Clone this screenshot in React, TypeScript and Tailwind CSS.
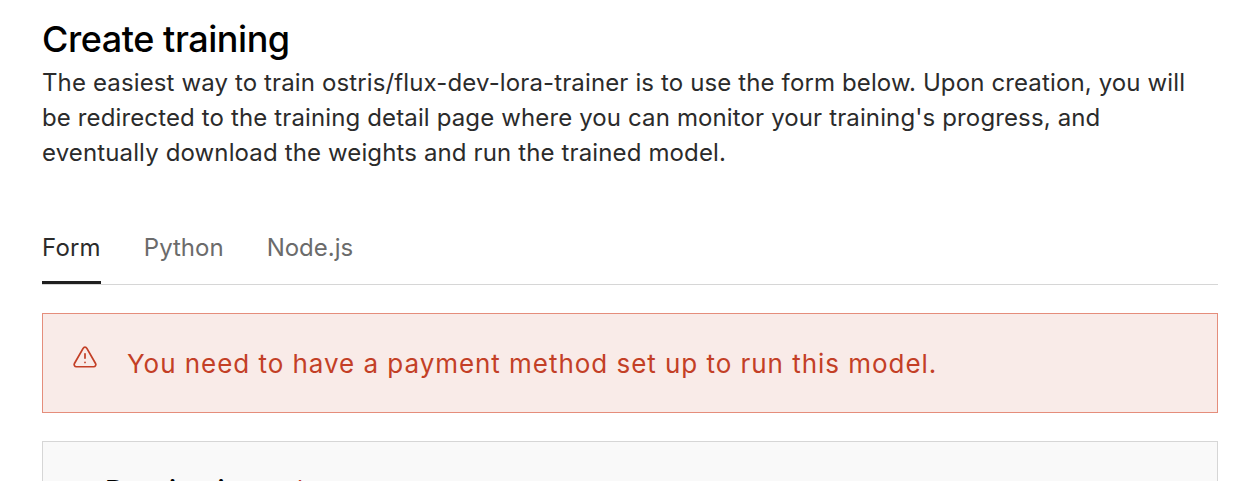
import { TriangleAlert } from 'lucide-react';

const tabs = ['Form', 'Python', 'Node.js'];

export default function App() {
    return (
        <div className="h-[481px] overflow-hidden bg-white font-['Inter',sans-serif] px-[42px] pt-[17px]">
            <div className="w-[1176px]">
                <h1 className="text-[36px] leading-[44px] font-medium text-black tracking-[-0.45px]">Create training</h1>
                <p className="w-[1160px] text-[24px] leading-[35px] tracking-[0.13px] text-[#2b2b2b] mt-[4px]">
                    The easiest way to train ostris/flux-dev-lora-trainer is to use the form below. Upon creation, you will be redirected to the training detail page where you can monitor your training's progress, and eventually download the weights and run the trained model.
                </p>

                <div className="flex gap-[43px] border-b border-[#d6d6d6] mt-[55px]">
                    {tabs.map((tab, i) => (
                        <div
                            key={tab}
                            className={i === 0
                                ? 'h-[59px] pt-[8px] text-[24px] leading-[30px] tracking-[0.2px] text-[#2b2b2b] border-b-[3px] border-[#1f1f1f] -mb-px'
                                : 'h-[59px] pt-[8px] text-[24px] leading-[30px] text-[#6b6b6b]'}
                        >
                            {tab}
                        </div>
                    ))}
                </div>

                <div className="flex items-start gap-[29px] h-[100px] mt-[28px] pl-[29px] pt-[31px] bg-[#f9ebe8] border border-[#e58d7b] text-[#c33f26]">
                    <TriangleAlert className="w-[26px] h-[26px] mt-[-1px]" strokeWidth={1.6} />
                    <span className="text-[26px] leading-[36px] tracking-[0.96px] mt-[1px]">You need to have a payment method set up to run this model.</span>
                </div>

                <div className="h-[200px] mt-[28px] px-[62px] pt-[31px] bg-[#f9f9f9] border border-[#d6d6d6]">
                    <p className="text-[28px] leading-[36px] font-medium text-black">
                        Passing input <span className="text-[#c33f26]">*</span>
                    </p>
                </div>
            </div>
        </div>
    );
}
